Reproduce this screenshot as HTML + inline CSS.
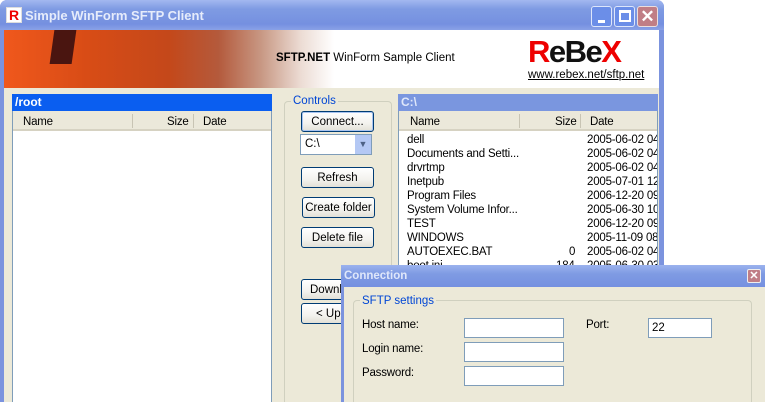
<!DOCTYPE html>
<html><head><style>
*{margin:0;padding:0;box-sizing:border-box}
html,body{width:765px;height:402px;overflow:hidden;background:#fff}
body{font-family:"Liberation Sans",Tahoma,sans-serif;font-size:11px}
#w{position:relative;width:765px;height:402px;overflow:hidden}
.abs{position:absolute}
.win{left:0;top:0;width:664px;height:402px;background:#7b93de;border-radius:7px 7px 0 0}
.title{left:0;top:0;width:664px;height:30px;background:linear-gradient(#a3b8f0,#7f9be3 30%,#7590e0 80%,#8aa2e6);border-radius:7px 7px 0 0}
.client{left:4px;top:30px;width:655px;height:372px;background:#ece9d8}
.banner{left:4px;top:30px;width:655px;height:58px;background:#fff}
.hdrcol{background:#ebe8da;border-bottom:2px solid #d6d2c2;height:20px}
.btn{position:absolute;background:linear-gradient(#fff,#f3f2ee 60%,#e2e0d6);border:1px solid #003c74;border-radius:3px;text-align:center;font-size:11.5px;line-height:20px;height:21px;white-space:nowrap;overflow:hidden}
.row{position:absolute;font-size:11.5px;white-space:nowrap;letter-spacing:-0.2px}
.tb{position:absolute;background:#fff;border:1px solid #7f9db9;height:20px}
</style></head><body><div id="w">
<div class="abs win"></div>
<div class="abs title"></div>
<div class="abs" style="left:6px;top:7px;width:16px;height:16px;background:#fff;border:1px solid #ddd"><div style="color:#e00;font-weight:bold;font-size:14px;line-height:14px;text-align:center">R</div></div>
<div class="abs" style="left:25px;top:8px;color:#e6ecfb;font-weight:bold;font-size:13px;">Simple WinForm SFTP Client</div>
<div class="abs" style="left:591px;top:6px;width:21px;height:21px;background:#6b8ee8;border:1px solid #dde6fb;border-radius:3px"><div style="position:absolute;left:6px;top:13px;width:7px;height:3px;background:#fff"></div></div>
<div class="abs" style="left:614px;top:6px;width:21px;height:21px;background:#6b8ee8;border:1px solid #dde6fb;border-radius:3px"><div style="position:absolute;left:4px;top:3px;width:12px;height:12px;border:2px solid #fff;border-top-width:3px"></div></div>
<div class="abs" style="left:637px;top:6px;width:21px;height:21px;background:#c07e86;border:1px solid #eadede;border-radius:3px;color:#fff;font-size:17px;font-weight:bold;text-align:center;line-height:19px">✕</div>
<div class="abs client"></div>
<div class="abs banner"></div>
<div class="abs" style="left:4px;top:30px;width:330px;height:58px;background:linear-gradient(90deg,#f0581c 0%,#d84c16 25%,#c4481a 50%,#b45a3c 65%,#c89884 78%,#ecdcd4 90%,#fff 100%)"></div>
<div class="abs" style="left:52px;top:30px;width:22px;height:34px;background:#4a1510;transform:skewX(-8deg)"></div>
<div class="abs" style="left:276px;top:52px;font-size:11.5px;"><b>SFTP.NET</b> WinForm Sample Client</div>
<div class="abs" style="left:528px;top:36px;font-size:31px;font-weight:900;letter-spacing:-1.5px;line-height:32px"><span style="color:#e00">R</span><span style="color:#111">eBe</span><span style="color:#e00">X</span></div>
<div class="abs" style="left:528px;top:69px;font-size:11.5px;text-decoration:underline">www.rebex.net/sftp.net</div>

<div class="abs" style="left:12px;top:94px;width:260px;height:308px;background:#fff;border:1px solid #7f9db9;border-bottom:none"></div>
<div class="abs" style="left:12px;top:94px;width:260px;height:17px;background:#0a5ef0;color:#fff;font-weight:bold;font-size:12px;padding-left:3px;line-height:16px">/root</div>
<div class="abs hdrcol" style="left:13px;top:111px;width:258px"></div>
<div class="abs" style="left:132px;top:114px;width:1px;height:14px;background:#c8c4b4"></div>
<div class="abs" style="left:193px;top:114px;width:1px;height:14px;background:#c8c4b4"></div>
<div class="row" style="left:23px;top:116px">Name</div>
<div class="row" style="left:167px;top:116px">Size</div>
<div class="row" style="left:203px;top:116px">Date</div>

<div class="abs" style="left:284px;top:101px;width:108px;height:301px;border:1px solid #d0d0bf;border-bottom:none;border-radius:4px 4px 0 0"></div>
<div class="abs" style="left:291px;top:95px;background:#ece9d8;color:#0046d5;font-size:11.5px;padding:0 2px">Controls</div>
<div class="btn" style="left:301px;top:111px;width:73px;box-shadow:inset 0 0 0 1px #a8c4f0">Connect...</div>
<div class="abs" style="left:300px;top:134px;width:72px;height:21px;background:#fff;border:1px solid #7f9db9;font-size:11.5px;padding:3px 4px">C:\</div>
<div class="abs" style="left:355px;top:135px;width:16px;height:19px;background:#b4c8f4;color:#4d6185;font-size:9px;text-align:center;line-height:19px">▼</div>
<div class="btn" style="left:301px;top:167px;width:73px">Refresh</div>
<div class="btn" style="left:302px;top:197px;width:73px">Create folder</div>
<div class="btn" style="left:301px;top:227px;width:73px">Delete file</div>
<div class="btn" style="left:301px;top:279px;width:73px;text-align:left;padding-left:8px">Download &gt;</div>
<div class="btn" style="left:301px;top:303px;width:73px;text-align:left;padding-left:14px">&lt; Upload</div>

<div class="abs" style="left:398px;top:94px;width:260px;height:308px;background:#fff;border:1px solid #7f9db9;border-bottom:none"></div>
<div class="abs" style="left:398px;top:94px;width:260px;height:17px;background:#7a96df;color:#dfe7fa;font-weight:bold;font-size:12px;padding-left:3px;line-height:16px">C:\</div>
<div class="abs hdrcol" style="left:399px;top:111px;width:258px"></div>
<div class="abs" style="left:519px;top:114px;width:1px;height:14px;background:#c8c4b4"></div>
<div class="abs" style="left:580px;top:114px;width:1px;height:14px;background:#c8c4b4"></div>
<div class="row" style="left:410px;top:116px">Name</div>
<div class="row" style="left:555px;top:116px">Size</div>
<div class="row" style="left:590px;top:116px">Date</div>
<div class="abs" style="left:399px;top:131px;width:258px;height:140px;overflow:hidden">
<div class="row" style="left:8px;top:3px">dell</div><div class="row" style="left:188px;top:3px">2005-06-02 04</div>
<div class="row" style="left:8px;top:17px">Documents and Setti...</div><div class="row" style="left:188px;top:17px">2005-06-02 04</div>
<div class="row" style="left:8px;top:31px">drvrtmp</div><div class="row" style="left:188px;top:31px">2005-06-02 04</div>
<div class="row" style="left:8px;top:45px">Inetpub</div><div class="row" style="left:188px;top:45px">2005-07-01 12</div>
<div class="row" style="left:8px;top:59px">Program Files</div><div class="row" style="left:188px;top:59px">2006-12-20 09</div>
<div class="row" style="left:8px;top:73px">System Volume Infor...</div><div class="row" style="left:188px;top:73px">2005-06-30 10</div>
<div class="row" style="left:8px;top:87px">TEST</div><div class="row" style="left:188px;top:87px">2006-12-20 09</div>
<div class="row" style="left:8px;top:101px">WINDOWS</div><div class="row" style="left:188px;top:101px">2005-11-09 08</div>
<div class="row" style="left:8px;top:115px">AUTOEXEC.BAT</div><div class="row" style="left:170px;top:115px">0</div><div class="row" style="left:188px;top:115px">2005-06-02 04</div>
<div class="row" style="left:8px;top:129px">boot.ini</div><div class="row" style="left:157px;top:129px">184</div><div class="row" style="left:188px;top:129px">2005-06-30 03</div>
</div>

<div class="abs" style="left:341px;top:265px;width:424px;height:137px;background:#7b93de"></div>
<div class="abs" style="left:341px;top:265px;width:424px;height:22px;background:linear-gradient(#9bb2ee,#7f9be3 40%,#7590e0)"></div>
<div class="abs" style="left:344px;top:270px;color:#dfe7fa;font-weight:bold;font-size:11.5px">Connection</div>
<div class="abs" style="left:747px;top:269px;width:14px;height:14px;background:#c07e86;border:1px solid #eee;border-radius:2px;color:#fff;font-size:11px;font-weight:bold;text-align:center;line-height:12px">✕</div>
<div class="abs" style="left:344px;top:287px;width:421px;height:115px;background:#ece9d8"></div>
<div class="abs" style="left:353px;top:300px;width:399px;height:102px;border:1px solid #d0d0bf;border-bottom:none;border-radius:4px 4px 0 0"></div>
<div class="abs" style="left:360px;top:295px;background:#ece9d8;color:#0046d5;font-size:11.5px;padding:0 2px">SFTP settings</div>
<div class="row" style="left:362px;top:319px">Host name:</div>
<div class="row" style="left:362px;top:343px">Login name:</div>
<div class="row" style="left:362px;top:367px">Password:</div>
<div class="row" style="left:586px;top:319px">Port:</div>
<div class="tb" style="left:464px;top:318px;width:100px"></div>
<div class="tb" style="left:464px;top:342px;width:100px"></div>
<div class="tb" style="left:464px;top:366px;width:100px"></div>
<div class="tb" style="left:648px;top:318px;width:64px;font-size:11.5px;padding:3px 3px">22</div>
</div></body></html>
